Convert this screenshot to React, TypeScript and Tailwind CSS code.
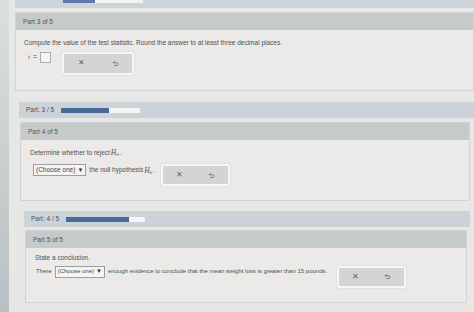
import React from 'react';

const Progress: React.FC<{ fill: number }> = ({ fill }) => (
  <div className="w-[79px] h-[5px] bg-[#f4f5f5]">
    <div className="h-full bg-[#49699a]" style={{ width: `${fill}px` }} />
  </div>
);

const Sub: React.FC = () => (
  <span className="italic font-['Liberation_Serif',serif] text-[7.5px]">
    H<sub className="text-[5px] not-italic">0</sub>
  </span>
);

const ActionBox: React.FC<{ className?: string }> = ({ className = '' }) => (
  <div
    className={`flex items-center justify-around rounded-[2px] border-2 border-[#f7f7f6] bg-[#d2d5d4] shadow-[0_0_1px_rgba(0,0,0,0.35)] text-[#5e6466] ${className}`}
  >
    <span className="text-[8px] leading-none">✕</span>
    <svg width="7" height="7" viewBox="0 0 24 24" fill="none" stroke="#5e6466" strokeWidth="2.6">
      <path d="M4 9h11a5 5 0 0 1 0 10H8" />
      <path d="M8 5 4 9l4 4" />
    </svg>
  </div>
);

const Select: React.FC = () => (
  <div className="flex items-center gap-[2px] h-[12px] px-[2px] border border-[#9a9ea0] bg-[#f4f4f3] text-[#444] whitespace-nowrap">
    <span>(Choose one)</span>
    <span className="text-[6px] text-[#333]">▼</span>
  </div>
);

const PartBar: React.FC<{ label: string; fill: number; className: string }> = ({ label, fill, className }) => (
  <div className={`flex items-center h-[16px] bg-[#cbd3d8] ${className}`}>
    <span className="w-[42px] pl-[7px] text-[#4a5257]">{label}</span>
    <Progress fill={fill} />
  </div>
);

const App: React.FC = () => {
  return (
    <div className="flex w-[474px] h-[312px] overflow-hidden bg-[#e7e7e5] text-[6.5px] text-[#4b4f52] font-['Liberation_Sans',Arial,sans-serif]">
      {/* left edge of the window */}
      <div className="w-[9px] shrink-0 bg-gradient-to-b from-[#dcdfdf] to-[#b9c0c3]" />

      <div className="flex-1 flex flex-col">
        {/* top progress (cut off) */}
        <div className="h-[8px] ml-[6px] bg-[#cdd4d8]">
          <div className="ml-[48px] w-[80px] h-[3px] bg-[#f4f5f5]">
            <div className="h-full w-[32px] bg-[#5b7aa6]" />
          </div>
        </div>

        {/* Part 3 of 5 */}
        <div className="mt-[4px] ml-[6px] border border-[#d2d3d2]">
          <div className="h-[17px] flex items-center pl-[7px] bg-[#c6cac9] text-[#50565a]">Part 3 of 5</div>
          <div className="h-[60px] bg-[#ebeae8] px-[8px] pt-[8px]">
            <p>Compute the value of the test statistic. Round the answer to at least three decimal places.</p>
            <div className="flex items-start mt-[4px]">
              <div className="flex items-center gap-[3px] pl-[4px] w-[38px]">
                <span className="italic font-['Liberation_Serif',serif] text-[7px]">t</span>
                <span>=</span>
                <div className="w-[11px] h-[11px] border border-[#a9adaf] bg-[#f4f4f3]" />
              </div>
              <ActionBox className="w-[72px] h-[23px]" />
            </div>
          </div>
        </div>

        <PartBar label="Part: 3 / 5" fill={48} className="mt-[11px] ml-[10px]" />

        {/* Part 4 of 5 */}
        <div className="mt-[4px] ml-[11px] mr-[4px] border border-[#d2d3d2]">
          <div className="h-[17px] flex items-center pl-[7px] bg-[#c6cac9] text-[#50565a]">Part 4 of 5</div>
          <div className="h-[60px] bg-[#ebeae8] px-[9px] pt-[7px]">
            <p className="flex items-center gap-[1px]">
              Determine whether to reject <Sub />.
            </p>
            <div className="flex items-start mt-[6px] pl-[3px]">
              <Select />
              <span className="ml-[3px] mr-[6px] h-[12px] flex items-center gap-[1px] whitespace-nowrap">
                the null hypothesis <Sub />.
              </span>
              <ActionBox className="w-[69px] h-[22px]" />
            </div>
          </div>
        </div>

        <PartBar label="Part: 4 / 5" fill={63} className="mt-[10px] ml-[15px] mr-[4px]" />

        {/* Part 5 of 5 */}
        <div className="mt-[3px] ml-[16px] mr-[7px] border border-[#d2d3d2]">
          <div className="h-[17px] flex items-center pl-[7px] bg-[#c6cac9] text-[#50565a]">Part 5 of 5</div>
          <div className="h-[54px] bg-[#ebeae8] px-[9px] pt-[5px]">
            <p>State a conclusion.</p>
            <div className="flex items-start mt-[3px] pl-[1px] text-[6px]">
              <span className="mr-[3px] h-[12px] flex items-center">There</span>
              <Select />
              <span className="ml-[3px] mr-[10px] h-[12px] flex items-center whitespace-nowrap">
                enough evidence to conclude that the mean weight loss is greater than 15 pounds.
              </span>
              <ActionBox className="w-[69px] h-[22px]" />
            </div>
          </div>
        </div>
      </div>
    </div>
  );
};

export default App;
